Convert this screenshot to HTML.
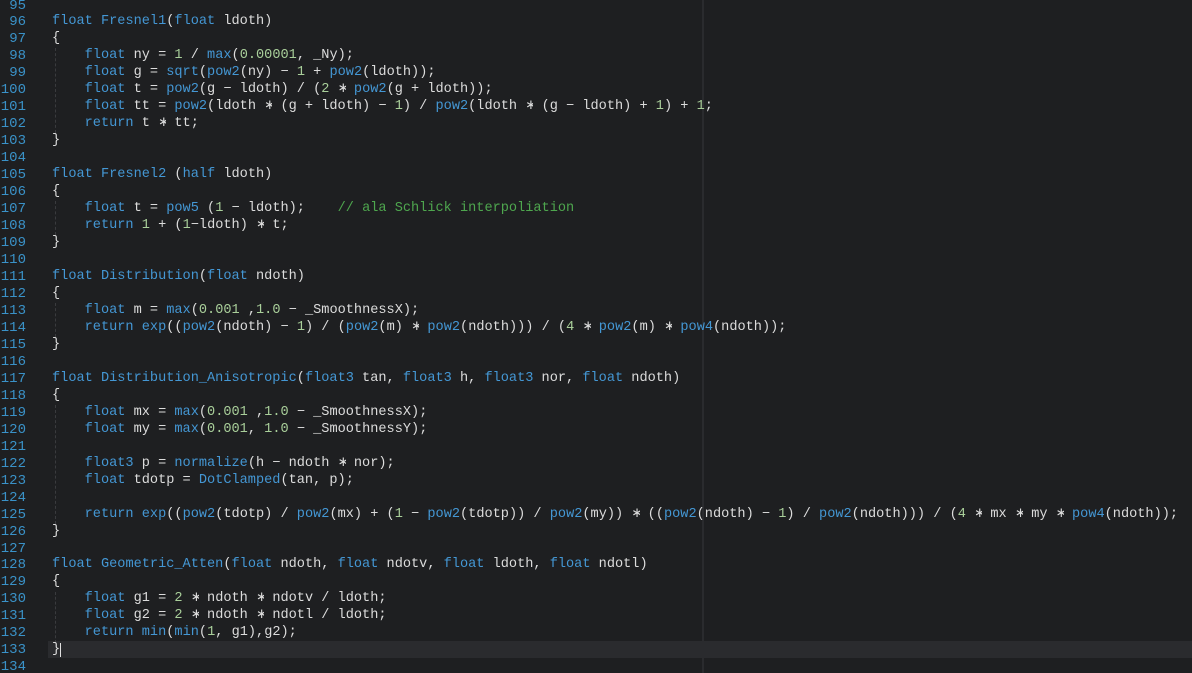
<!DOCTYPE html>
<html><head><meta charset="utf-8"><style>
html,body{margin:0;padding:0;background:#1e1f21;width:1192px;height:673px;overflow:hidden}
#ed{position:relative;width:1192px;height:673px;font-family:"Liberation Mono",monospace;font-size:13.6px;color:#dcdcdc}
.ruler{position:absolute;left:702px;top:0;width:2px;height:673px;background:#2a2b2e}
.hl{position:absolute;left:48px;top:641px;width:1144px;height:17px;background:#2a2b2e}
.ln{position:absolute;left:0;width:26px;text-align:right;color:#3a92c8;font-size:14px}
.code{position:absolute;left:52px}
.l{height:16.97px;line-height:16.97px;white-space:pre}
.k{color:#4497d4}.n{color:#a9cf9a}.c{color:#4ea64e}
i{font-style:normal;display:inline-block;width:8.16px;text-align:center;overflow:hidden;vertical-align:top}
.g{position:absolute;left:55px;border-left:1px dashed #3a3b3e}
.cur{position:absolute;left:60px;top:643px;width:1px;height:14px;background:#e0e0e0}
</style></head><body><div id="ed">
<div class="ruler"></div>
<div class="hl"></div>
<div class="g" style="top:48px;height:85px"></div>
<div class="g" style="top:201px;height:34px"></div>
<div class="g" style="top:303px;height:34px"></div>
<div class="g" style="top:405px;height:119px"></div>
<div class="g" style="top:592px;height:51px"></div>
<div class="ln" style="top:-2.5px">
<div class="l">95</div><div class="l">96</div><div class="l">97</div><div class="l">98</div><div class="l">99</div><div class="l">100</div><div class="l">101</div><div class="l">102</div><div class="l">103</div><div class="l">104</div><div class="l">105</div><div class="l">106</div><div class="l">107</div><div class="l">108</div><div class="l">109</div><div class="l">110</div><div class="l">111</div><div class="l">112</div><div class="l">113</div><div class="l">114</div><div class="l">115</div><div class="l">116</div><div class="l">117</div><div class="l">118</div><div class="l">119</div><div class="l">120</div><div class="l">121</div><div class="l">122</div><div class="l">123</div><div class="l">124</div><div class="l">125</div><div class="l">126</div><div class="l">127</div><div class="l">128</div><div class="l">129</div><div class="l">130</div><div class="l">131</div><div class="l">132</div><div class="l">133</div><div class="l">134</div>
</div>
<div class="code" style="top:-2.5px">
<div class="l"> </div>
<div class="l"><span class="k">float</span> <span class="k">Fresnel1</span>(<span class="k">float</span> ldoth)</div>
<div class="l">{</div>
<div class="l">    <span class="k">float</span> ny = <span class="n">1</span> / <span class="k">max</span>(<span class="n">0.00001</span>, _Ny);</div>
<div class="l">    <span class="k">float</span> g = <span class="k">sqrt</span>(<span class="k">pow2</span>(ny) <i>−</i> <span class="n">1</span> + <span class="k">pow2</span>(ldoth));</div>
<div class="l">    <span class="k">float</span> t = <span class="k">pow2</span>(g <i>−</i> ldoth) / (<span class="n">2</span> <i>∗</i> <span class="k">pow2</span>(g + ldoth));</div>
<div class="l">    <span class="k">float</span> tt = <span class="k">pow2</span>(ldoth <i>∗</i> (g + ldoth) <i>−</i> <span class="n">1</span>) / <span class="k">pow2</span>(ldoth <i>∗</i> (g <i>−</i> ldoth) + <span class="n">1</span>) + <span class="n">1</span>;</div>
<div class="l">    <span class="k">return</span> t <i>∗</i> tt;</div>
<div class="l">}</div>
<div class="l"> </div>
<div class="l"><span class="k">float</span> <span class="k">Fresnel2</span> (<span class="k">half</span> ldoth)</div>
<div class="l">{</div>
<div class="l">    <span class="k">float</span> t = <span class="k">pow5</span> (<span class="n">1</span> <i>−</i> ldoth);    <span class="c">// ala Schlick interpoliation</span></div>
<div class="l">    <span class="k">return</span> <span class="n">1</span> + (<span class="n">1</span><i>−</i>ldoth) <i>∗</i> t;</div>
<div class="l">}</div>
<div class="l"> </div>
<div class="l"><span class="k">float</span> <span class="k">Distribution</span>(<span class="k">float</span> ndoth)</div>
<div class="l">{</div>
<div class="l">    <span class="k">float</span> m = <span class="k">max</span>(<span class="n">0.001</span> ,<span class="n">1.0</span> <i>−</i> _SmoothnessX);</div>
<div class="l">    <span class="k">return</span> <span class="k">exp</span>((<span class="k">pow2</span>(ndoth) <i>−</i> <span class="n">1</span>) / (<span class="k">pow2</span>(m) <i>∗</i> <span class="k">pow2</span>(ndoth))) / (<span class="n">4</span> <i>∗</i> <span class="k">pow2</span>(m) <i>∗</i> <span class="k">pow4</span>(ndoth));</div>
<div class="l">}</div>
<div class="l"> </div>
<div class="l"><span class="k">float</span> <span class="k">Distribution_Anisotropic</span>(<span class="k">float3</span> tan, <span class="k">float3</span> h, <span class="k">float3</span> nor, <span class="k">float</span> ndoth)</div>
<div class="l">{</div>
<div class="l">    <span class="k">float</span> mx = <span class="k">max</span>(<span class="n">0.001</span> ,<span class="n">1.0</span> <i>−</i> _SmoothnessX);</div>
<div class="l">    <span class="k">float</span> my = <span class="k">max</span>(<span class="n">0.001</span>, <span class="n">1.0</span> <i>−</i> _SmoothnessY);</div>
<div class="l"> </div>
<div class="l">    <span class="k">float3</span> p = <span class="k">normalize</span>(h <i>−</i> ndoth <i>∗</i> nor);</div>
<div class="l">    <span class="k">float</span> tdotp = <span class="k">DotClamped</span>(tan, p);</div>
<div class="l"> </div>
<div class="l">    <span class="k">return</span> <span class="k">exp</span>((<span class="k">pow2</span>(tdotp) / <span class="k">pow2</span>(mx) + (<span class="n">1</span> <i>−</i> <span class="k">pow2</span>(tdotp)) / <span class="k">pow2</span>(my)) <i>∗</i> ((<span class="k">pow2</span>(ndoth) <i>−</i> <span class="n">1</span>) / <span class="k">pow2</span>(ndoth))) / (<span class="n">4</span> <i>∗</i> mx <i>∗</i> my <i>∗</i> <span class="k">pow4</span>(ndoth));</div>
<div class="l">}</div>
<div class="l"> </div>
<div class="l"><span class="k">float</span> <span class="k">Geometric_Atten</span>(<span class="k">float</span> ndoth, <span class="k">float</span> ndotv, <span class="k">float</span> ldoth, <span class="k">float</span> ndotl)</div>
<div class="l">{</div>
<div class="l">    <span class="k">float</span> g1 = <span class="n">2</span> <i>∗</i> ndoth <i>∗</i> ndotv / ldoth;</div>
<div class="l">    <span class="k">float</span> g2 = <span class="n">2</span> <i>∗</i> ndoth <i>∗</i> ndotl / ldoth;</div>
<div class="l">    <span class="k">return</span> <span class="k">min</span>(<span class="k">min</span>(<span class="n">1</span>, g1),g2);</div>
<div class="l">}</div>
<div class="l"> </div>
</div>
<div class="cur"></div>
</div></body></html>
